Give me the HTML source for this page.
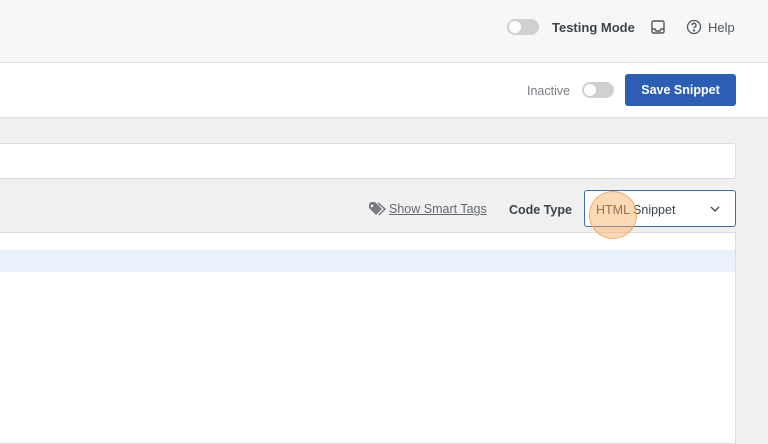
<html><head><style>
body{margin:0;width:768px;height:430px;overflow:hidden;background:#f0f0f1;font-family:"Liberation Sans",sans-serif;position:relative}
.a{position:absolute}
.tog{position:absolute;width:32px;height:16px;border-radius:9px;background:#d0d0d0}
.tog::after{content:"";position:absolute;left:2px;top:2px;width:12px;height:12px;border-radius:50%;background:#fff}
</style></head><body>
<div class="a" style="left:0;top:0;width:768px;height:62px;background:#f7f7f7;border-bottom:1px solid #e2e2e2"></div>
<div class="tog" style="left:507px;top:19px"></div>
<div class="a" style="left:552px;top:20px;font-size:13px;font-weight:bold;color:#3c434a">Testing Mode</div>
<svg class="a" style="left:650px;top:19px" width="16" height="16" viewBox="0 0 16 16" fill="none" stroke="#50575e" stroke-width="1.4"><rect x="2" y="2" width="12" height="12" rx="1.5"/><path d="M2 10h3l1 2h4l1-2h3"/></svg>
<svg class="a" style="left:686px;top:19px" width="16" height="16" viewBox="0 0 16 16" fill="none" stroke="#50575e" stroke-width="1.3"><circle cx="8" cy="8" r="6.5"/><path d="M6 6.3a2 2 0 1 1 2.6 1.9c-.5.2-.6.5-.6 1.1"/><circle cx="8" cy="11.5" r=".5" fill="#50575e"/></svg>
<div class="a" style="left:708px;top:20px;font-size:13px;color:#50575e">Help</div>
<div class="a" style="left:0;top:63px;width:768px;height:54px;background:#fff;border-bottom:1px solid #e2e2e2"></div>
<div class="a" style="left:527px;top:84px;font-size:12.5px;color:#787c82">Inactive</div>
<div class="tog" style="left:582px;top:82px"></div>
<div class="a" style="left:625px;top:74px;width:111px;height:32px;background:#2c5eb3;border-radius:3px;color:#fff;font-size:12.5px;font-weight:bold;text-align:center;line-height:32px">Save Snippet</div>
<div class="a" style="left:-2px;top:143px;width:736px;height:34px;background:#fff;border:1px solid #dcdcde;border-radius:3px"></div>
<svg class="a" style="left:368px;top:202px" width="18" height="14" viewBox="0 0 18 14"><path d="M1 2v4l7 7 6-6-7-7H3z" fill="#787c82"/><path d="M10 1l7 6-6 6" fill="none" stroke="#787c82" stroke-width="1.5"/><circle cx="4" cy="4" r="1.2" fill="#fff"/></svg>
<div class="a" style="left:389px;top:202px;font-size:12.5px;color:#646970;text-decoration:underline">Show Smart Tags</div>
<div class="a" style="left:509px;top:203px;font-size:12.5px;font-weight:bold;color:#3c434a">Code Type</div>
<div class="a" style="left:-2px;top:232px;width:736px;height:210px;background:#fff;border:1px solid #dcdcde"></div>
<div class="a" style="left:0;top:250px;width:735px;height:22px;background:#e8f1fc"></div>
<div class="a" style="left:584px;top:190px;width:150px;height:35px;background:#fff;border:1px solid #3d6fb0;border-radius:3px"></div>
<div class="a" style="left:596px;top:203px;font-size:12.5px;color:#3c434a">HTML Snippet</div>
<svg class="a" style="left:709px;top:205px" width="12" height="8" viewBox="0 0 12 8"><path d="M2 2l4 4 4-4" fill="none" stroke="#3c434a" stroke-width="1.3"/></svg>
<div class="a" style="left:589px;top:191px;width:46px;height:46px;border-radius:50%;background:rgba(252,170,90,.45);border:1.5px solid rgba(245,160,80,.8)"></div>
</body></html>
